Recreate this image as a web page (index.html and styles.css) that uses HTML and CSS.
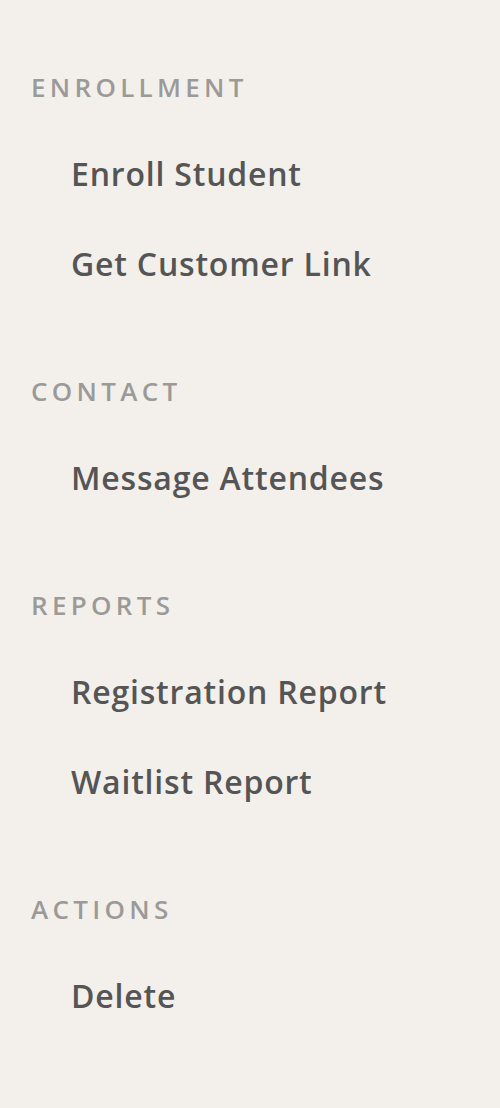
FILE: index.html
```html
<!DOCTYPE html>
<html lang="en">
<head>
<meta charset="utf-8">
<title>Menu</title>
<link rel="stylesheet" href="styles.css">
</head>
<body>
<nav class="menu">
  <section class="group">
    <h2 class="group-title">Enrollment</h2>
    <ul class="items">
      <li class="item">Enroll Student</li>
      <li class="item">Get Customer Link</li>
    </ul>
  </section>
  <section class="group">
    <h2 class="group-title">Contact</h2>
    <ul class="items">
      <li class="item">Message Attendees</li>
    </ul>
  </section>
  <section class="group">
    <h2 class="group-title">Reports</h2>
    <ul class="items">
      <li class="item">Registration Report</li>
      <li class="item">Waitlist Report</li>
    </ul>
  </section>
  <section class="group">
    <h2 class="group-title">Actions</h2>
    <ul class="items">
      <li class="item">Delete</li>
    </ul>
  </section>
</nav>
</body>
</html>
```
FILE: styles.css
```css
html, body {
  margin: 0;
  padding: 0;
  background: #f3f0ec;
}
body {
  font-family: "Open Sans", Lato, sans-serif;
  min-height: 1108px;
}
.menu {
  display: flex;
  flex-direction: column;
  gap: 67px;
  padding: 72px 0 0 31px;
}
.group {
  display: flex;
  flex-direction: column;
  gap: 27px;
}
.group-title {
  margin: 0;
  font-size: 26px;
  line-height: 30px;
  font-weight: 600;
  letter-spacing: 4.3px;
  text-transform: uppercase;
  color: #9b9a98;
}
.items {
  list-style: none;
  margin: 0;
  padding: 0 0 0 40px;
}
.item {
  font-size: 32px;
  line-height: 90px;
  font-weight: 600;
  letter-spacing: 0.8px;
  color: #555555;
}
```
